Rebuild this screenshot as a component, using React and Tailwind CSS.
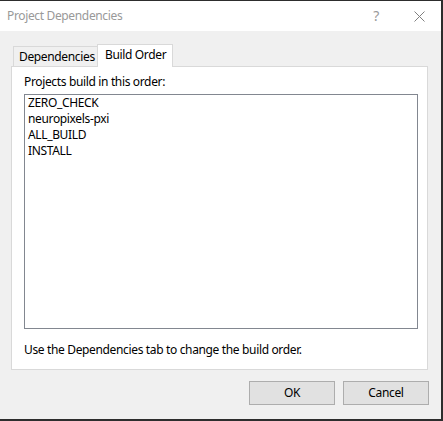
export default function App() {
  const items = ['ZERO_CHECK', 'neuropixels-pxi', 'ALL_BUILD', 'INSTALL']

  return (
    <div
      className="w-[443px] h-[421px] flex flex-col bg-[#f0f0f0] border-t border-r-2 border-b-2 border-[#2d2d2d] text-[12px] text-black tracking-[-0.35px]"
      style={{ fontFamily: '"Noto Sans", "Open Sans", sans-serif' }}
    >
      {/* title bar */}
      <div className="h-[30px] bg-white flex items-center shrink-0">
        <span className="pl-[7px] text-[#999999] text-[12px] leading-[16px]">Project Dependencies</span>
        <span className="ml-auto mr-[35px] text-[#9a9a9a] text-[14px] leading-[16px]">?</span>
        <svg width="11" height="11" viewBox="0 0 11 11" className="mr-[16px]">
          <path d="M0.5 0.5 L10.5 10.5 M10.5 0.5 L0.5 10.5" stroke="#808080" strokeWidth="1" fill="none" />
        </svg>
      </div>

      {/* body */}
      <div className="flex-1 flex flex-col pl-[11px] pr-[12px] pt-[13px]">
        {/* tabs */}
        <div className="flex items-end h-[22px] pl-[2px]">
          <div className="w-[84px] h-[20px] bg-[#f0f0f0] border border-b-0 border-r-0 border-[#d9d9d9] flex items-center pl-[5px] leading-[16px]">
            Dependencies
          </div>
          <div className="relative z-10 w-[76px] h-[23px] -mb-px bg-white border border-b-0 border-[#d9d9d9] flex items-start pt-[2px] pl-[7px] leading-[16px]">
            Build Order
          </div>
        </div>

        {/* panel */}
        <div className="w-[417px] h-[304px] bg-white border border-[#d9d9d9] flex flex-col pt-[7px] pl-[12px] pr-[9px]">
          <div className="leading-[16px] h-[16px]">Projects build in this order:</div>
          <div className="mt-[4px] h-[235px] border border-[#828790] bg-white flex flex-col pl-[3px]">
            {items.map((it) => (
              <div key={it} className="leading-[16px]">
                {it}
              </div>
            ))}
          </div>
          <div className="mt-[13px] leading-[16px]">Use the Dependencies tab to change the build order.</div>
        </div>

        {/* buttons */}
        <div className="flex justify-end gap-[8px] mt-[11px]">
          <button className="w-[86px] h-[24px] bg-[#e1e1e1] border border-[#adadad] leading-[16px]">OK</button>
          <button className="w-[86px] h-[24px] bg-[#e1e1e1] border border-[#adadad] leading-[16px]">Cancel</button>
        </div>
      </div>
    </div>
  )
}
